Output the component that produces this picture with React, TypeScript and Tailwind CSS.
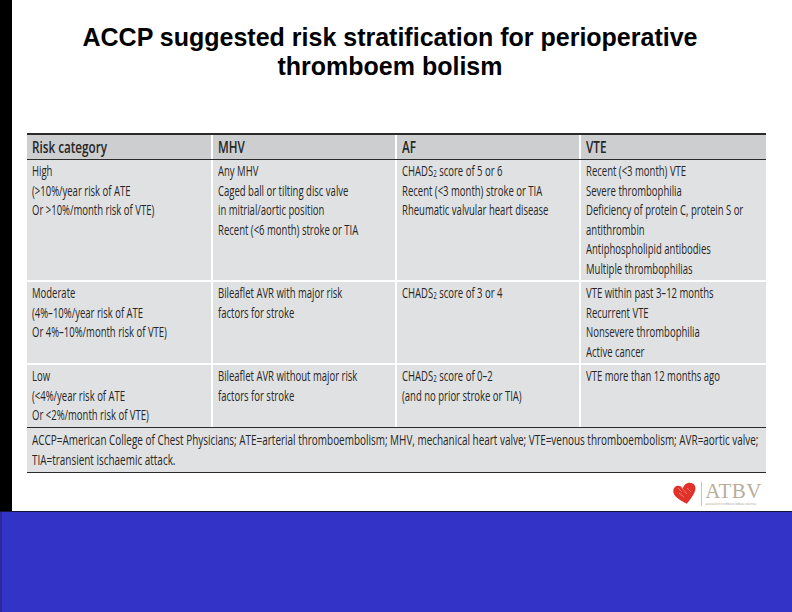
import React from 'react';

const cell = "px-[5px] pt-[1px] text-[#262626]";

function Line({ children, wide }: { children: React.ReactNode; wide?: boolean }) {
  return (
    <div className={`h-[19.5px] leading-[19.5px] whitespace-nowrap origin-left ${wide ? 'scale-x-[0.71]' : 'scale-x-[0.68]'}`}>{children}</div>
  );
}

function Cell({ lines, className = '' }: { lines: React.ReactNode[]; className?: string }) {
  return (
    <div className={`${cell} ${className}`}>
      {lines.map((l, i) => <Line key={i}>{l}</Line>)}
    </div>
  );
}

const chads = (rest: string) => (
  <>CHADS<sub className="text-[9px] relative top-[1px]">2</sub> {rest}</>
);

const rows: { h: string; cols: React.ReactNode[][] }[] = [
  {
    h: 'h-[120px]',
    cols: [
      ['High', '(>10%/year risk of ATE', 'Or >10%/month risk of VTE)'],
      ['Any MHV', 'Caged ball or tilting disc valve', 'in mitrial/aortic position', 'Recent (<6 month) stroke or TIA'],
      [chads('score of 5 or 6'), 'Recent (<3 month) stroke or TIA', 'Rheumatic valvular heart disease'],
      ['Recent (<3 month) VTE', 'Severe thrombophilia', 'Deficiency of protein C, protein S or', 'antithrombin', 'Antiphospholipid antibodies', 'Multiple thrombophilias'],
    ],
  },
  {
    h: 'h-[81px]',
    cols: [
      ['Moderate', '(4%–10%/year risk of ATE', 'Or 4%–10%/month risk of VTE)'],
      ['Bileaflet AVR with major risk', 'factors for stroke'],
      [chads('score of 3 or 4')],
      ['VTE within past 3–12 months', 'Recurrent VTE', 'Nonsevere thrombophilia', 'Active cancer'],
    ],
  },
  {
    h: 'h-[62px]',
    cols: [
      ['Low', '(<4%/year risk of ATE', 'Or <2%/month risk of VTE)'],
      ['Bileaflet AVR without major risk', 'factors for stroke'],
      [chads('score of 0–2'), '(and no prior stroke or TIA)'],
      ['VTE more than 12 months ago'],
    ],
  },
];

const colW = ['w-[184px]', 'w-[182px]', 'w-[182px]', 'w-[185px]'];

function Logo() {
  return (
    <div className="flex items-center gap-[3px]">
      <svg width="26" height="24" viewBox="0 0 26 24">
        <path d="M13 22 C6 16 1 12 2 7 C3 2 9 1 12 6 C14 1 21 0 24 5 C26 10 20 16 13 22 Z" fill="#e0322a" transform="rotate(-10 13 12)" />
        <path d="M6 6 L10 10 M9 5 L15 12 M15 6 L19 10 M7 11 L12 15" stroke="#f47a6a" strokeWidth="1" />
      </svg>
      <div className="w-px h-[24px] bg-[#c9c4b8]" />
      <div className="flex flex-col">
        <span className="text-[21px] leading-[19px] text-[#b7ae9c] tracking-[0.5px]" style={{ fontFamily: '"Liberation Serif", serif' }}>ATBV</span>
        <span className="mt-[2px] text-[3px] leading-[3px] text-[#a8a090] whitespace-nowrap">asociación trombosis bilbao valencia</span>
      </div>
    </div>
  );
}

export default function App() {
  return (
    <div className="w-[792px] h-[612px] flex flex-col bg-white" style={{ fontFamily: '"Open Sans", sans-serif' }}>
      <div className="h-[511px] flex">
        <div className="w-[12px] bg-black" />
        <div className="flex-1 flex flex-col">
          <div className="pt-[23px] h-[133px] pr-[24px] text-center text-black text-[25px] font-bold leading-[29px]" style={{ fontFamily: '"Liberation Sans", Arial, sans-serif' }}>
            <div>ACCP suggested risk stratification for perioperative</div>
            <div>thromboem bolism</div>
          </div>
          <div className="ml-[15px] w-[739px] text-[14px]">
            <div className="border-t-2 border-b border-[#2a2a2a] flex gap-[2px] bg-white">
              {['Risk category', 'MHV', 'AF', 'VTE'].map((t, i) => (
                <div key={t} className={`${colW[i]} h-[24px] bg-[#cdced0] px-[5px] leading-[24px] font-semibold text-[16px] text-[#262626]`}>
                  <div className="whitespace-nowrap origin-left scale-x-[0.73]">{t}</div>
                </div>
              ))}
            </div>
            {rows.map((r, ri) => (
              <div key={ri} className={`flex gap-[2px] ${ri > 0 ? 'mt-[2px]' : ''}`}>
                {r.cols.map((c, ci) => (
                  <Cell key={ci} lines={c} className={`${colW[ci]} ${r.h} bg-[#e0e1e2]`} />
                ))}
              </div>
            ))}
            <div className="border-t border-b border-[#2a2a2a] bg-[#e0e1e2] h-[46px] px-[5px] pt-[2px] text-[#262626]">
              <Line wide>ACCP=American College of Chest Physicians; ATE=arterial thromboembolism; MHV, mechanical heart valve; VTE=venous thromboembolism; AVR=aortic valve;</Line>
              <Line wide>TIA=transient ischaemic attack.</Line>
            </div>
            <div className="flex justify-end pr-[4px] pt-[9px]">
              <Logo />
            </div>
          </div>
        </div>
      </div>
      <div className="h-px bg-[#15153a]" />
      <div className="flex-1 bg-[#3333c8] border-l-2 border-[#2a2a9a]" />
    </div>
  );
}
